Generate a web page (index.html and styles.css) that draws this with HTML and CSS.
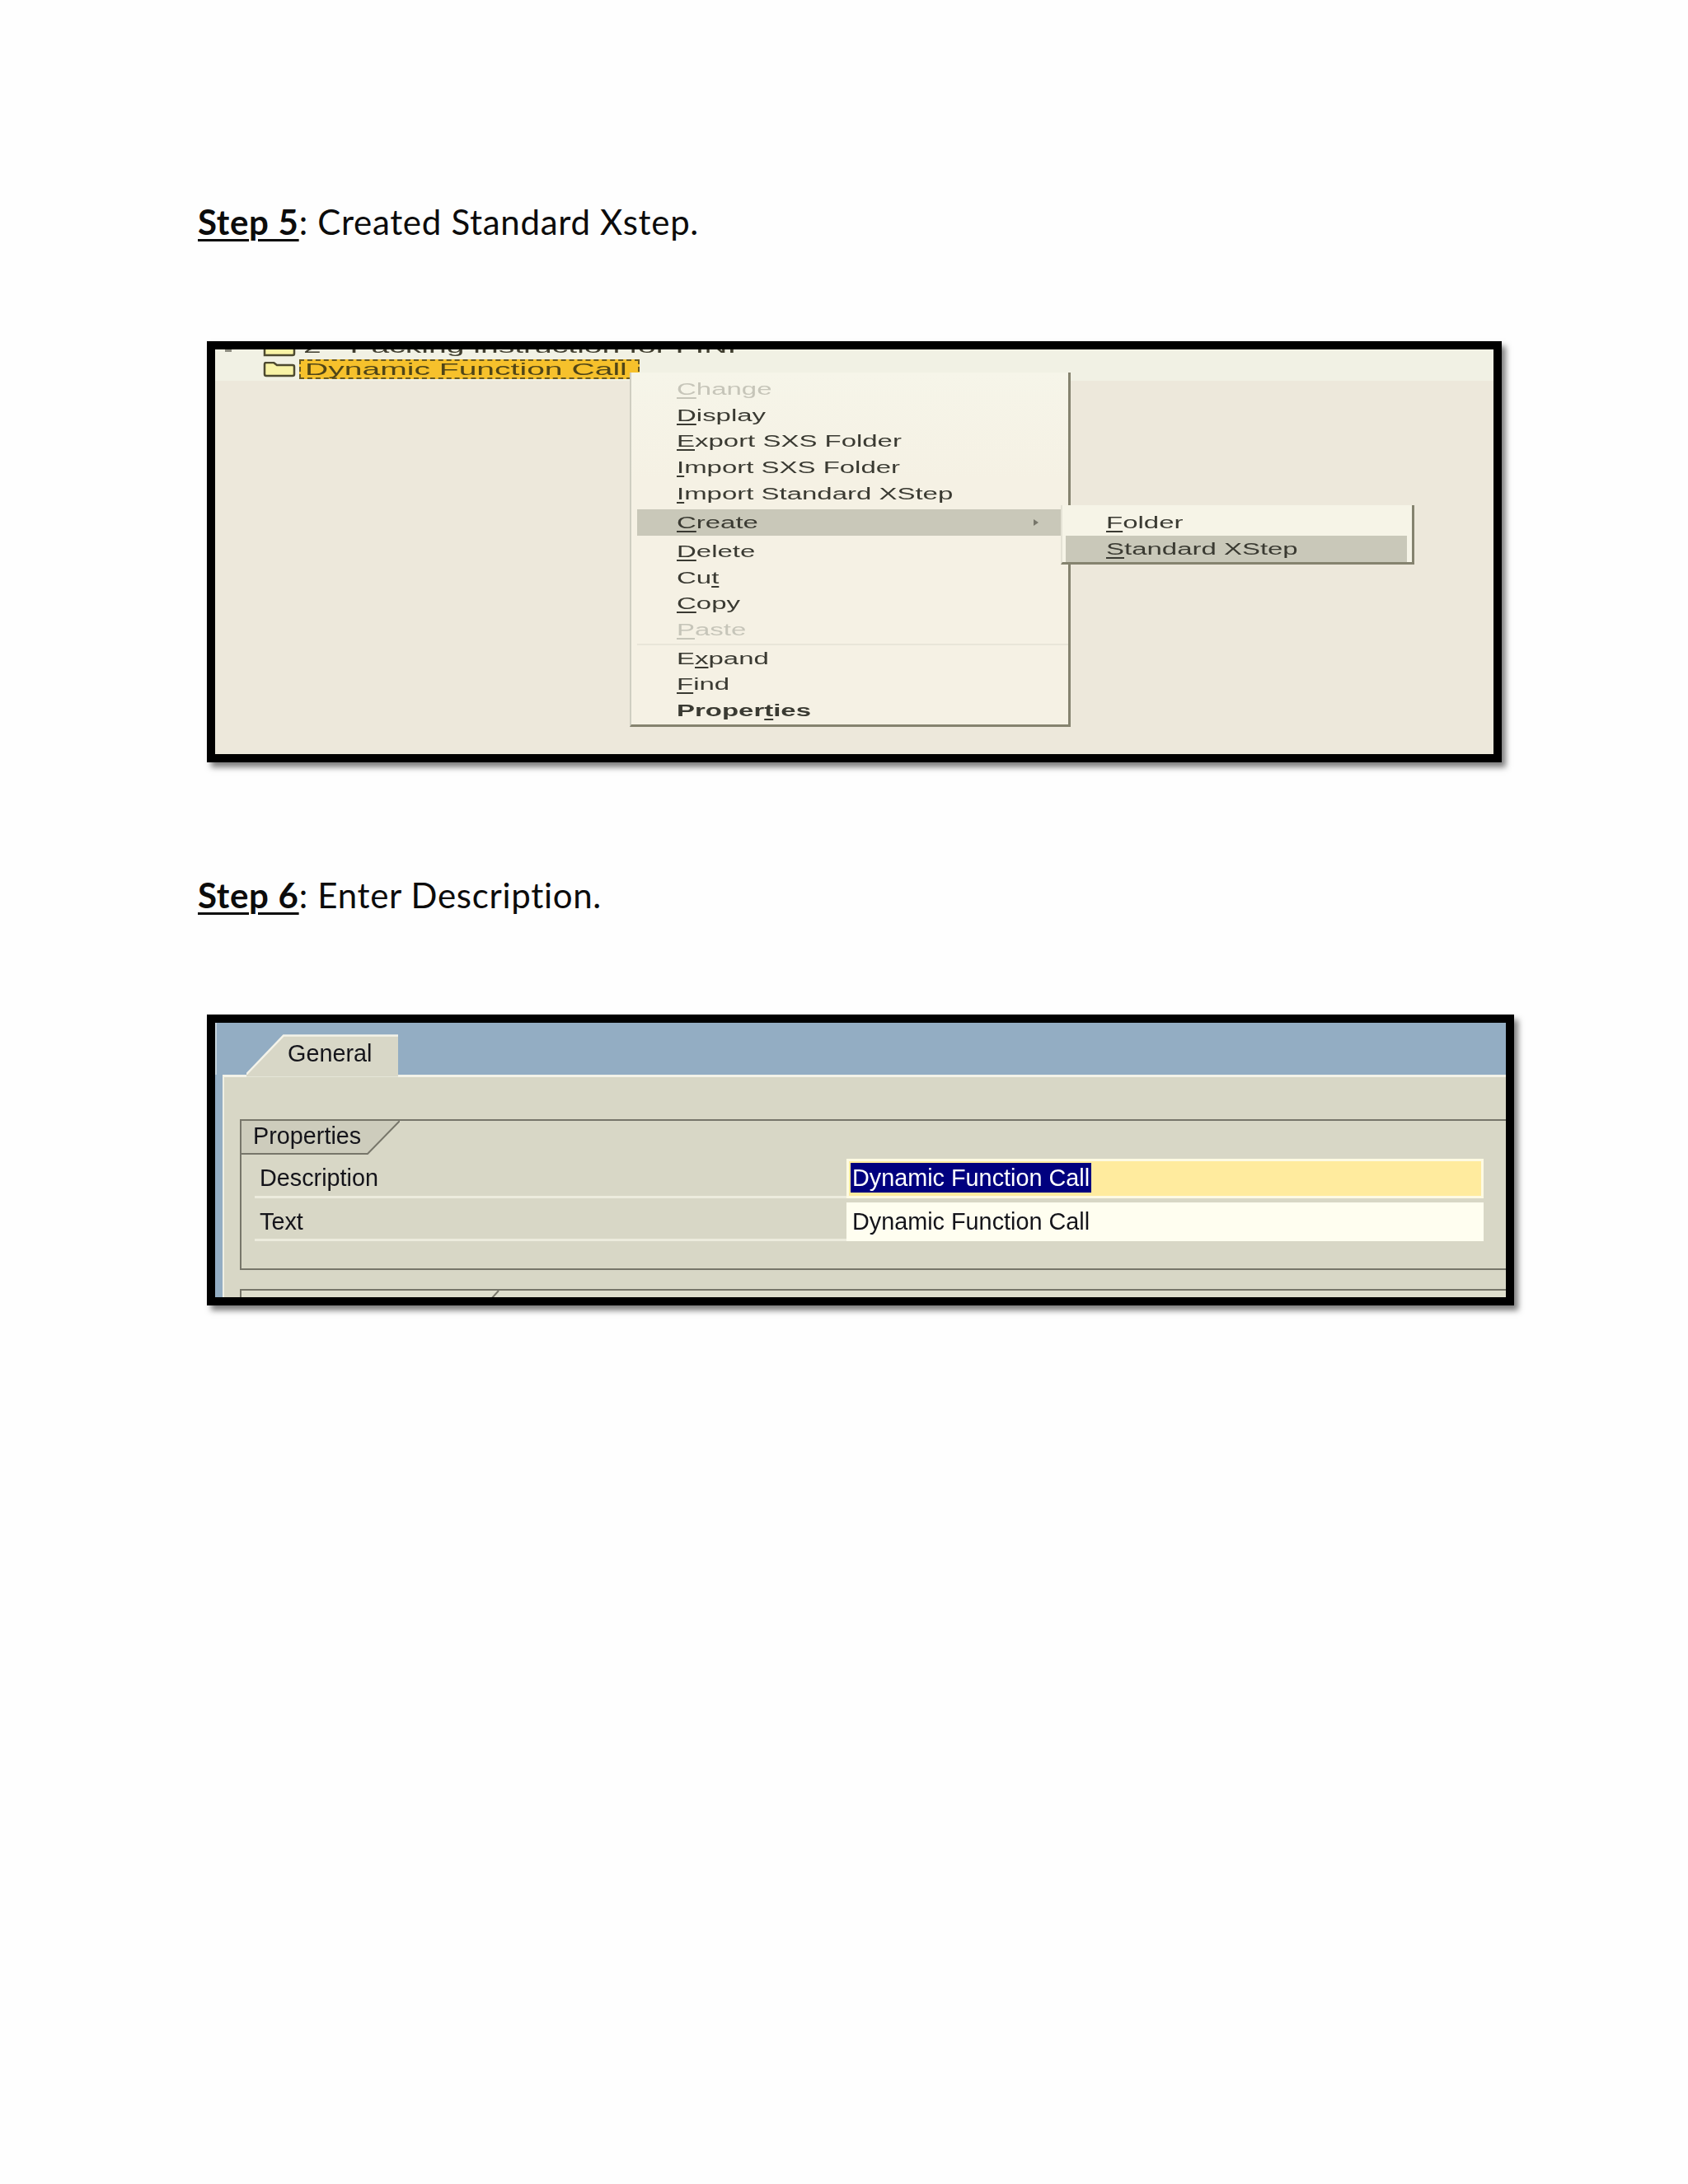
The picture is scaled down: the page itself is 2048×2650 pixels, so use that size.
FILE: index.html
```html
<!DOCTYPE html>
<html lang="en">
<head>
<meta charset="utf-8">
<title>Step 5 and Step 6</title>
<link rel="stylesheet" href="styles.css">
</head>
<body>
<main class="page">
  <h2 class="step step-first"><span class="step-no">Step 5</span>: Created Standard Xstep.</h2>

  <section class="shot shot-menu">
    <div class="tree">
      <div class="tree-row tree-row-clipped">
        <span class="twist"></span>
        <svg class="folder" viewBox="0 0 40 19"><path d="M2 17V4Q2 2 4 2H13L17 5H36Q38 5 38 7V15Q38 17 36 17H4Z"/></svg>
        <span class="tree-label"><span class="wide-tree">2 - Packing instruction for FINI</span></span>
      </div>
      <div class="tree-row">
        <svg class="folder" viewBox="0 0 40 19"><path d="M2 15V3Q2 1 4 1H13L17 4H36Q38 4 38 6V15Q38 17 36 17H4Q2 17 2 15Z"/></svg>
        <span class="tree-label tree-label-selected"><span class="wide-tree">Dynamic Function Call</span></span>
      </div>
    </div>

    <nav class="menu">
      <div class="menu-item is-disabled"><span class="wide"><u>C</u>hange</span></div>
      <div class="menu-item"><span class="wide"><u>D</u>isplay</span></div>
      <div class="menu-item"><span class="wide"><u>E</u>xport SXS Folder</span></div>
      <div class="menu-item"><span class="wide"><u>I</u>mport SXS Folder</span></div>
      <div class="menu-item"><span class="wide"><u>I</u>mport Standard XStep</span></div>
      <div class="menu-item is-open"><span class="wide"><u>C</u>reate</span><span class="arrow"></span></div>
      <div class="menu-item"><span class="wide"><u>D</u>elete</span></div>
      <div class="menu-item"><span class="wide">Cu<u>t</u></span></div>
      <div class="menu-item"><span class="wide"><u>C</u>opy</span></div>
      <div class="menu-item is-disabled"><span class="wide"><u>P</u>aste</span></div>
      <div class="menu-sep"></div>
      <div class="menu-item"><span class="wide">E<u>x</u>pand</span></div>
      <div class="menu-item"><span class="wide"><u>F</u>ind</span></div>
      <div class="menu-item is-bold"><span class="wide">Proper<u>t</u>ies</span></div>
    </nav>

    <nav class="submenu">
      <div class="menu-item sub-item"><span class="wide"><u>F</u>older</span></div>
      <div class="menu-item sub-item is-open"><span class="wide"><u>S</u>tandard XStep</span></div>
    </nav>
  </section>

  <h2 class="step step-second"><span class="step-no">Step 6</span>: Enter Description.</h2>

  <section class="shot shot-form">
    <div class="tabstrip">
      <div class="tab">
        <svg class="tab-shape" viewBox="0 0 184 51"><polygon class="tab-fill" points="0,48 45,1 184,1 184,51 0,51"/><polyline class="tab-edge" points="0,48 45,1 184,1"/></svg>
        <span class="tab-text">General</span>
      </div>
    </div>
    <div class="panel">
      <div class="group">
        <div class="group-head">
          <svg class="head-shape" viewBox="0 0 192 42"><polygon class="head-fill" points="0,0 192,0 153,40 0,40"/><polyline class="head-edge" points="0,40 153,40 192,0"/></svg>
          <span class="head-text">Properties</span>
        </div>
        <div class="row row-first">
          <div class="row-label">Description</div>
          <div class="field field-active"><span class="selection">Dynamic Function Call</span></div>
        </div>
        <div class="row">
          <div class="row-label">Text</div>
          <div class="field">Dynamic Function Call</div>
        </div>
      </div>
      <div class="group group-next">
        <svg class="next-slant" viewBox="0 0 12 10"><line x1="11" y1="0" x2="2" y2="10"/></svg>
      </div>
    </div>
  </section>
</main>
</body>
</html>
```
FILE: styles.css
```css
* { box-sizing: border-box; }

html, body {
  margin: 0;
  background: #fefefe;
}

.page {
  width: 2048px;
  height: 2650px;
  overflow: hidden;
  padding-top: 1px;
}

.step {
  margin: 0 0 0 240px;
  height: 60px;
  font: 400 42px/60px Lato, "Open Sans", sans-serif;
  color: #0c0c0c;
  letter-spacing: .7px;
}

.step-first { margin-top: 238px; }
.step-second { margin-top: 131px; }

.step-no {
  font-weight: 700;
  text-decoration: underline;
  text-decoration-thickness: 3px;
  text-underline-offset: 5px;
}

.shot {
  position: relative;
  margin-left: 251px;
  border: 10px solid #000;
  box-shadow: 5px 6px 7px rgba(0, 0, 0, .5);
  overflow: hidden;
}

/* Step 5: context menu */
.shot-menu {
  width: 1571px;
  height: 511px;
  margin-top: 115px;
  background: #ede8db;
  box-shadow: 5px 6px 7px rgba(0, 0, 0, .5), inset 0 0 3px #e6e7d8;
}

.tree {
  display: flow-root;
  height: 38px;
  background: #f1f1e4;
  filter: blur(.7px);
}

.tree-row {
  display: flex;
  align-items: center;
  height: 24px;
  padding-left: 58px;
  margin-top: 1px;
}

.tree-row-clipped {
  margin-top: -13px;
  padding-left: 12px;
}

.twist {
  width: 8px;
  height: 4px;
  margin-right: 38px;
  background: #8d8c80;
  align-self: flex-end;
  margin-bottom: 8px;
}

.folder {
  width: 40px;
  height: 19px;
  margin-right: 4px;
  flex: none;
}

.folder path {
  fill: #f8f3a6;
  stroke: #4d4a30;
  stroke-width: 2.5;
}

.tree-label {
  width: 413px;
  height: 24px;
  padding-left: 5px;
  font: 21px/19px "Liberation Sans", Arial, sans-serif;
  color: #3f3d2e;
  white-space: nowrap;
  flex: none;
}

.tree-label-selected {
  background: #f6c12c;
  border: 2px dashed #6b5a20;
  color: #4f4518;
}

.wide-tree {
  display: inline-block;
  transform: scaleX(1.86);
  transform-origin: left center;
}

.menu {
  position: absolute;
  left: 503px;
  top: 28px;
  width: 535px;
  height: 430px;
  padding: 4px 0 0 7px;
  background: linear-gradient(#f6f5e9, #f5f1e4 30%);
  border-left: 2px solid #cfcec1;
  border-right: 3px solid #85836f;
  border-bottom: 3px solid #85836f;
  filter: blur(.7px);
}

.menu-item {
  display: flex;
  align-items: center;
  height: 31.7px;
  padding-left: 48px;
  font: 19.5px/24px "Liberation Sans", Arial, sans-serif;
  color: #3a3a32;
  white-space: nowrap;
}

.wide {
  display: inline-block;
  transform: scaleX(1.69);
  transform-origin: left center;
}

.wide u {
  text-decoration-thickness: 2px;
  text-underline-offset: 3px;
}

.menu-item.is-open {
  margin: 4px 0 3px;
  background: #c9c8b9;
}

.menu-item.is-disabled { color: #c6c5b9; }
.is-bold { font-weight: 700; }

.arrow {
  width: 0;
  height: 0;
  margin-left: auto;
  margin-right: 36px;
  border-left: 6px solid #77766a;
  border-top: 4px solid transparent;
  border-bottom: 4px solid transparent;
}

.menu-sep {
  height: 2px;
  margin: 1px 0 0;
  background: #e8e5d8;
}

.submenu {
  position: absolute;
  left: 1026px;
  top: 189px;
  width: 429px;
  height: 72px;
  padding: 5px 6px 0 4px;
  background: #f6f4e7;
  border-left: 2px solid #e4e2d5;
  border-right: 3px solid #85836f;
  border-bottom: 3px solid #85836f;
  filter: blur(.7px);
}

.sub-item {
  height: 32px;
  padding-left: 49px;
}

.sub-item.is-open { margin: 0; }

/* Step 6: form */
.shot-form {
  width: 1586px;
  height: 353px;
  margin-top: 115px;
  background: #93adc3;
  font: 28.8px/36px "Liberation Sans", Arial, sans-serif;
  color: #14141a;
}

.tabstrip {
  height: 63px;
  padding: 14px 0 0 36px;
  border-left: 2px solid #c4d2dc;
}

.tab {
  position: relative;
  z-index: 1;
  width: 184px;
  height: 52px;
  padding: 5px 0 0 50px;
}

.tab-shape {
  position: absolute;
  left: 0;
  top: 0;
  width: 184px;
  height: 52px;
}

.tab-fill { fill: #d8d7c7; }

.tab-edge {
  fill: none;
  stroke: #f4f3e9;
  stroke-width: 2.5;
}

.tab-text {
  position: relative;
  filter: blur(.3px);
}

.panel {
  height: 270px;
  margin-left: 9px;
  padding: 51px 0 0 19px;
  background: #d8d7c6;
  border-top: 3px solid #f3f2e8;
  border-left: 2px solid #f0efe4;
}

.group {
  height: 183px;
  border: 2px solid #77766a;
  border-right: 0;
  filter: blur(.3px);
}

.group-head {
  position: relative;
  height: 40px;
  padding: 0 0 0 14px;
  line-height: 36px;
}

.head-shape {
  position: absolute;
  left: 0;
  top: 0;
  width: 192px;
  height: 42px;
}

.head-fill { fill: #cdccbc; }

.head-edge {
  fill: none;
  stroke: #77766a;
  stroke-width: 2;
}

.head-text { position: relative; }

.row {
  display: flex;
  height: 47px;
  margin-left: 16px;
}

.row-first {
  height: 48px;
  margin-top: 6px;
  margin-bottom: 5px;
}

.row-label {
  flex: 0 0 718px;
  padding: 5px 0 0 6px;
  border-bottom: 3px solid #ecebdd;
}

.field {
  flex: 0 0 773px;
  padding: 5px 0 0 7px;
  background: #fffef0;
}

.field-active {
  padding: 2px 0 0 2px;
  background: #ffeb9e;
  border: 3px solid #fdfae3;
}

.selection {
  display: inline-block;
  height: 36px;
  padding: 0 2px 0 2px;
  background: #00007f;
  color: #fff;
}

.group-next {
  position: relative;
  height: 30px;
  margin-top: 23px;
  background: #dfdfce;
}

.next-slant {
  position: absolute;
  left: 301px;
  top: 0;
  width: 12px;
  height: 10px;
}

.next-slant line {
  stroke: #77766a;
  stroke-width: 2;
}
```
